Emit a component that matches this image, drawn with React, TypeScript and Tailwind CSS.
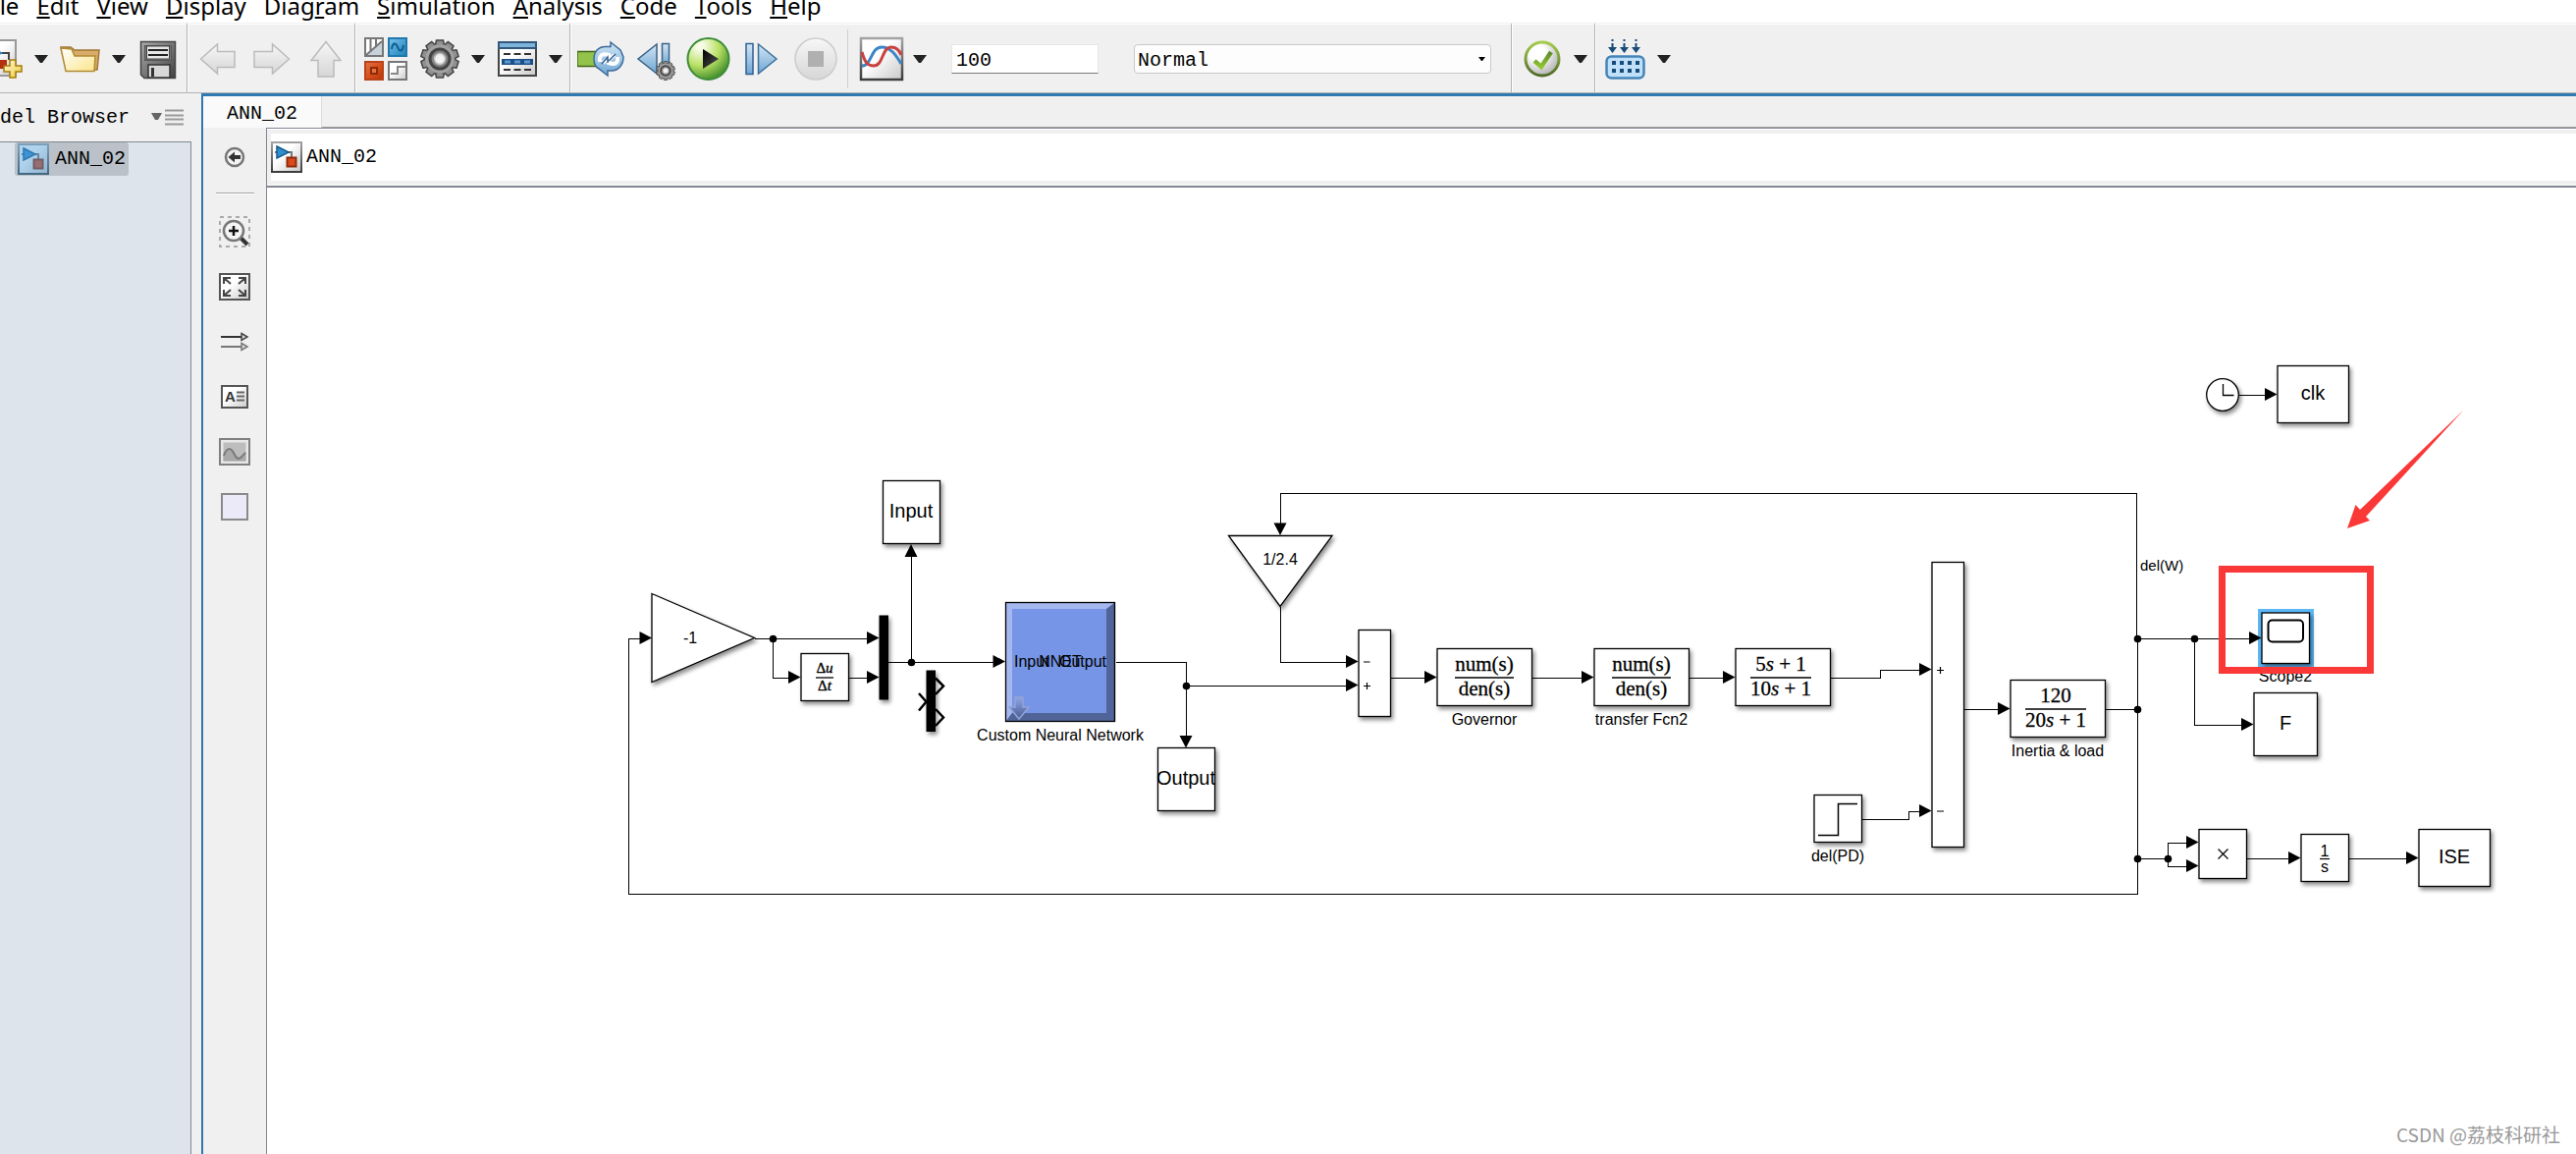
import { useState, type ReactNode } from 'react';

const MENUS = [
  { pre: '', key: 'F', post: 'ile' },
  { pre: '', key: 'E', post: 'dit' },
  { pre: '', key: 'V', post: 'iew' },
  { pre: '', key: 'D', post: 'isplay' },
  { pre: 'Diag', key: 'r', post: 'am' },
  { pre: '', key: 'S', post: 'imulation' },
  { pre: '', key: 'A', post: 'nalysis' },
  { pre: '', key: 'C', post: 'ode' },
  { pre: '', key: 'T', post: 'ools' },
  { pre: '', key: 'H', post: 'elp' },
];

// gradients and filters shared by every icon
function SharedDefs() {
  return (
    <svg className="absolute h-0 w-0" aria-hidden="true">
      <defs>
        <linearGradient id="paper" x1="0" y1="0" x2="1" y2="1">
          <stop offset="0.4" stopColor="#fff" />
          <stop offset="1" stopColor="#c9c9c9" />
        </linearGradient>
        <linearGradient id="frame" x1="0" y1="0" x2="0" y2="1">
          <stop offset="0" stopColor="#a3a3a3" />
          <stop offset="1" stopColor="#3c3c3c" />
        </linearGradient>
        <linearGradient id="metal" x1="0" y1="0" x2="1" y2="1">
          <stop offset="0" stopColor="#a9a9a9" />
          <stop offset="0.6" stopColor="#6d6d6d" />
          <stop offset="1" stopColor="#3f3f3f" />
        </linearGradient>
        <linearGradient id="sky" x1="0" y1="0" x2="0" y2="1">
          <stop offset="0" stopColor="#d3e6f5" />
          <stop offset="1" stopColor="#6ea6d3" />
        </linearGradient>
        <linearGradient id="azure" x1="0" y1="0" x2="1" y2="1">
          <stop offset="0" stopColor="#7cc4ec" />
          <stop offset="1" stopColor="#1b7fb9" />
        </linearGradient>
        <linearGradient id="rust" x1="0" y1="0" x2="1" y2="1">
          <stop offset="0" stopColor="#e0764a" />
          <stop offset="0.5" stopColor="#d9501c" />
          <stop offset="1" stopColor="#b93406" />
        </linearGradient>
        <linearGradient id="gold" x1="0" y1="0" x2="1" y2="1">
          <stop offset="0" stopColor="#fffbe0" />
          <stop offset="1" stopColor="#ecc93a" />
        </linearGradient>
        <linearGradient id="folder" x1="0" y1="0" x2="1" y2="1">
          <stop offset="0" stopColor="#fff" />
          <stop offset="1" stopColor="#fbe58a" />
        </linearGradient>
        <radialGradient id="go" cx="0.3" cy="0.2" r="0.85">
          <stop offset="0.1" stopColor="#f6fbe6" />
          <stop offset="0.55" stopColor="#b9e064" />
          <stop offset="1" stopColor="#3f8c2a" />
        </radialGradient>
        <linearGradient id="ghost" x1="0" y1="0" x2="0" y2="1">
          <stop offset="0" stopColor="#f7f7f7" />
          <stop offset="1" stopColor="#d6d6d6" />
        </linearGradient>
        <radialGradient id="pearl" cx="0.35" cy="0.3" r="0.8">
          <stop offset="0.3" stopColor="#fff" />
          <stop offset="1" stopColor="#a8a8a8" />
        </radialGradient>
        <linearGradient id="ringGreen" x1="0" y1="0" x2="0" y2="1">
          <stop offset="0" stopColor="#a7cc50" />
          <stop offset="1" stopColor="#4f6b28" />
        </linearGradient>
        <linearGradient id="leaf" x1="0" y1="0" x2="0" y2="1">
          <stop offset="0" stopColor="#5b8a2c" />
          <stop offset="1" stopColor="#8fc52f" />
        </linearGradient>
        <linearGradient id="coal" x1="0" y1="0" x2="1" y2="1">
          <stop offset="0" stopColor="#000" />
          <stop offset="1" stopColor="#555" />
        </linearGradient>
        <linearGradient id="download" x1="0" y1="0" x2="0" y2="1">
          <stop offset="0" stopColor="#8fa5e4" />
          <stop offset="1" stopColor="#4a5c94" />
        </linearGradient>
        <filter id="shadow" x="-20%" y="-20%" width="150%" height="150%">
          <feDropShadow dx="2" dy="3" stdDeviation="2" floodColor="#000" floodOpacity="0.45" />
        </filter>
      </defs>
    </svg>
  );
}

function Icon({ children }: { children: ReactNode }) {
  return (
    <svg viewBox="0 0 48 48" className="h-12 w-12" aria-hidden="true">
      {children}
    </svg>
  );
}

function ToolButton({ label, disabled, children }: { label: string; disabled?: boolean; children: ReactNode }) {
  return (
    <button type="button" title={label} aria-label={label} disabled={disabled} className="flex w-[55px] shrink-0 items-center justify-center">
      <Icon>{children}</Icon>
    </button>
  );
}

function CaretButton({ label }: { label: string }) {
  return (
    <button type="button" aria-label={label} className="flex w-6 shrink-0 items-center justify-center">
      <svg viewBox="0 0 14 8" className="h-2 w-3.5" aria-hidden="true">
        <path d="M0 0H14L8 8H6Z" fill="#222" />
      </svg>
    </button>
  );
}

function ToolGroup({ children, last }: { children: ReactNode; last?: boolean }) {
  return (
    <div className={`flex shrink-0 items-stretch border-l border-l-white px-0.5 pt-0.5 ${last ? '' : 'border-r border-r-[#b4b4b4]'}`}>
      {children}
    </div>
  );
}

const GEAR_TEETH = [0, 36, 72, 108, 144, 180, 216, 252, 288, 324];

function Gear({ cx, cy, r }: { cx: number; cy: number; r: number }) {
  const k = r / 20;
  return (
    <g transform={`translate(${cx} ${cy}) scale(${k})`}>
      {GEAR_TEETH.map(a => (
        <path key={a} d="M-4.5 -14L-3.5 -19H3.5L4.5 -14Z" transform={`rotate(${a})`} fill="#909090" stroke="#444" strokeWidth="1.5" />
      ))}
      <circle r="15" fill="#a2a2a2" />
      <circle r="10" fill="#808080" stroke="#444" strokeWidth="3" />
      <circle r="5.5" fill="#f3f3f3" stroke="#c2c2c2" strokeWidth="1.5" />
    </g>
  );
}

function ModelIcon({ selected }: { selected?: boolean }) {
  return (
    <svg viewBox="0 0 32 32" className="h-8 w-8 shrink-0" aria-hidden="true">
      <rect x="1" y="1" width="30" height="30" fill="url(#paper)" stroke="url(#frame)" strokeWidth="2" />
      <path d="M4 11H21V17" fill="none" stroke="#777" strokeWidth="2" />
      <path d="M6 5L18 11L6 17Z" fill="#2f8fd0" stroke="#175b8c" strokeWidth="1.5" />
      <rect x="16.5" y="16.5" width="9" height="9" fill="#d94a1c" stroke="#8e2c0c" strokeWidth="2" />
      {selected && <rect width="32" height="32" fill="#4d9bd6" opacity="0.45" />}
    </svg>
  );
}

function Toolbar() {
  const [stopTime, setStopTime] = useState('100');

  return (
    <div className="flex h-[71px] shrink-0 border-b border-[#b4b4b4] bg-[#f0f0f0] shadow-[inset_0_1px_0_#fff]">
      <div className="-ml-7 flex shrink-0">
        <ToolGroup>
          <ToolButton label="New model">
            <rect x="5" y="5" width="32" height="36" fill="url(#paper)" stroke="#999" strokeWidth="2" />
            <path d="M14 18H30V25" fill="none" stroke="#444" strokeWidth="2" />
            <path d="M12 11L24 18L12 25Z" fill="#2f8fd0" />
            <rect x="19" y="25" width="9" height="9" fill="#b3310f" />
            <path d="M31 25H37V31H43V37H37V43H31V37H25V31H31Z" fill="url(#gold)" stroke="#a67c08" strokeWidth="1.5" />
          </ToolButton>
          <CaretButton label="New options" />
          <ToolButton label="Open">
            <path d="M4 12H14L18 15H43L41 35H10Z" fill="#d9ad69" stroke="#a07633" strokeWidth="1.5" />
            <path d="M4 13L15 14L18 21H39L38 36.5H9Z" fill="url(#folder)" stroke="#b08a35" strokeWidth="1.5" />
          </ToolButton>
          <CaretButton label="Open options" />
          <ToolButton label="Save">
            <path d="M6.5 6.5H41.5V43.5H10L6.5 40Z" fill="url(#metal)" stroke="#444" strokeWidth="1.5" />
            <rect x="10.5" y="10.5" width="27" height="15" fill="#777" stroke="#555" />
            <rect x="12.5" y="11" width="23" height="13" fill="#e6e6e6" stroke="#444" />
            <path d="M14 15H34M14 20H34" stroke="#222" strokeWidth="2" />
            <path d="M14 43V30H36V43Z" fill="#d8d8d8" stroke="#333" strokeWidth="1.5" />
            <path d="M18.5 33V42" stroke="#333" strokeWidth="3" />
          </ToolButton>
        </ToolGroup>
      </div>
      <ToolGroup>
        <ToolButton label="Back" disabled>
          <path d="M6.5 24L23.5 9V16.5H41V32.5H23.5V39Z" fill="url(#ghost)" stroke="#bbb" strokeWidth="1.5" />
        </ToolButton>
        <ToolButton label="Forward" disabled>
          <path d="M41.5 24L24.5 9V16.5H6V32.5H24.5V39Z" fill="url(#ghost)" stroke="#bbb" strokeWidth="1.5" />
        </ToolButton>
        <ToolButton label="Up" disabled>
          <path d="M24 6.5L39 25.5H32V42H16V25.5H9Z" fill="url(#ghost)" stroke="#bbb" strokeWidth="1.5" />
        </ToolButton>
      </ToolGroup>
      <ToolGroup>
        <ToolButton label="Library browser">
          <rect x="3" y="3" width="18" height="18" fill="#c6d2da" stroke="#777" strokeWidth="2" />
          <path d="M4 4h4v13l-4 3ZM9 4h4v9l-4 4ZM15 4h5v3l-5 4Z" fill="#fff" />
          <path d="M8.5 4V17M14 4V12M4 20L20 6" fill="none" stroke="#777" strokeWidth="2" />
          <rect x="27" y="3" width="18" height="18" fill="url(#azure)" stroke="#1f78ad" strokeWidth="2" />
          <path d="M30 14C31 7 34 7 36 12S41 17 42 10" fill="none" stroke="#0d5e90" strokeWidth="2" />
          <rect x="3" y="27" width="18" height="18" fill="url(#rust)" stroke="#b8431a" strokeWidth="2" />
          <rect x="9" y="33" width="6" height="6" fill="#e4743f" stroke="#8c2c08" strokeWidth="2" />
          <rect x="27" y="27" width="18" height="18" fill="url(#paper)" stroke="#777" strokeWidth="2" />
          <path d="M29 39H36V32H44" fill="none" stroke="#888" strokeWidth="2" />
        </ToolButton>
        <ToolButton label="Model configuration parameters">
          <Gear cx={24} cy={24} r={20} />
        </ToolButton>
        <CaretButton label="Configuration options" />
        <ToolButton label="Model explorer">
          <rect x="5" y="7" width="38" height="34" fill="url(#paper)" stroke="#444" strokeWidth="2" />
          <rect x="5" y="7" width="38" height="6" fill="#7db4dc" stroke="#33587a" strokeWidth="2" />
          <path d="M10 19H17M20.5 19H27.5M31 19H38" stroke="#333" strokeWidth="2" />
          <path d="M10 35H17M20.5 35H27.5M31 35H38" stroke="#333" strokeWidth="2" />
          <path d="M8 27H40" stroke="#1c4f86" strokeWidth="6" />
          <path d="M11 27H17M21 27H27M31 27H37" stroke="#5c9bd2" strokeWidth="3" />
        </ToolButton>
        <CaretButton label="Explorer options" />
      </ToolGroup>
      <ToolGroup>
        <ToolButton label="Update diagram">
          <rect x="0" y="16.5" width="22" height="15" fill="#93c34a" stroke="#41651a" strokeWidth="1.5" />
          <path d="M17 24C17 16 22 11.5 29 11.5H34V7L44 15L47 22C47 30 42 36 35 36H31V41L22 34C18 32 17 28 17 24Z" fill="url(#sky)" stroke="#3c6a9a" strokeWidth="1.5" />
          <path d="M23 27C22 20 26 18 32 20V25L38 20M41 22C42 29 38 30 32 28V23L26 28" fill="none" stroke="#fff" strokeWidth="4" />
          <path d="M25 29L31 22V28M39 19L32 26" fill="none" stroke="#345f90" strokeWidth="1.5" />
        </ToolButton>
        <ToolButton label="Step back">
          <path d="M26 9V39L7 24Z" fill="url(#sky)" stroke="#3b6285" strokeWidth="1.5" />
          <rect x="31.5" y="8.5" width="7" height="22" fill="url(#sky)" stroke="#3b6285" strokeWidth="1.5" />
          <Gear cx={35} cy={36} r={10} />
        </ToolButton>
        <ToolButton label="Run">
          <circle cx="23.5" cy="24" r="21" fill="url(#go)" stroke="#3c8c38" strokeWidth="2" />
          <path d="M18 14L34 24L18 34Z" fill="url(#coal)" />
        </ToolButton>
        <ToolButton label="Step forward">
          <rect x="7" y="8.5" width="7" height="31" fill="url(#sky)" stroke="#2f5f92" strokeWidth="1.5" />
          <path d="M19.5 9V39L38 24Z" fill="url(#sky)" stroke="#3b7099" strokeWidth="1.5" />
        </ToolButton>
        <ToolButton label="Stop" disabled>
          <circle cx="23" cy="24" r="21" fill="url(#ghost)" stroke="#ccc" strokeWidth="1.5" />
          <rect x="15" y="16" width="16" height="16" fill="#b0b0b0" />
        </ToolButton>
        <div className="my-1 mr-1.5 ml-1 w-px bg-[#cfcfcf]" />
        <ToolButton label="Simulation data inspector">
          <rect x="3" y="3" width="42" height="42" fill="url(#paper)" stroke="url(#frame)" strokeWidth="2.5" />
          <path d="M4 31C14 31 13 12 24 12C33 12 38 19 44 29" fill="none" stroke="#3b86c6" strokeWidth="3" />
          <path d="M4 17C7 28 10 31 16 31C26 31 24 12 34 12C39 12 42 15 44 20" fill="none" stroke="#c9423f" strokeWidth="3" />
        </ToolButton>
        <CaretButton label="Inspector options" />
        <div className="ml-5 flex items-center gap-9 pr-[18px]">
          <input
            aria-label="Simulation stop time"
            value={stopTime}
            onChange={e => setStopTime(e.target.value)}
            className="h-[30px] w-[150px] border border-[#e6e6e6] border-b-[#7a7a7a] bg-white px-1 pt-0.5 font-['Liberation_Mono',monospace] text-xl leading-7 text-black outline-none"
          />
          <div className="relative flex items-center">
            <select
              aria-label="Simulation mode"
              defaultValue="Normal"
              className="h-[30px] w-[364px] appearance-none rounded border border-[#c8c8c8] bg-[#fdfdfd] px-[3px] pt-0.5 font-['Liberation_Mono',monospace] text-xl leading-7 text-black outline-none"
            >
              <option>Normal</option>
              <option>Accelerator</option>
              <option>Rapid Accelerator</option>
            </select>
            <svg viewBox="0 0 7 4" className="pointer-events-none absolute right-1.5 h-1 w-[7px]" aria-hidden="true">
              <path d="M0 0H7L4 4H3Z" fill="#000" />
            </svg>
          </div>
        </div>
      </ToolGroup>
      <ToolGroup>
        <ToolButton label="Model advisor">
          <circle cx="24" cy="24" r="17" fill="url(#pearl)" stroke="url(#ringGreen)" strokeWidth="3" />
          <path d="M16 26L23 32L33 17" fill="none" stroke="url(#leaf)" strokeWidth="4.5" />
        </ToolButton>
        <CaretButton label="Advisor options" />
      </ToolGroup>
      <ToolGroup last>
        <ToolButton label="Build model">
          <path d="M10.5 4V6M22.5 4V6M34.5 4V6M10.5 8V13M22.5 8V13M34.5 8V13" stroke="#174b7a" strokeWidth="2" />
          <path d="M6 12H15L10.5 18ZM18 12H27L22.5 18ZM30 12H39L34.5 18Z" fill="#174b7a" />
          <rect x="4.5" y="21.5" width="38" height="22" rx="5" fill="#bfe0f8" stroke="#4484b8" strokeWidth="2.5" />
          <path d="M9 28H39M9 36H39" stroke="#174b7a" strokeWidth="4" strokeDasharray="4 4" strokeDashoffset="-1" />
        </ToolButton>
        <CaretButton label="Build options" />
      </ToolGroup>
    </div>
  );
}

function ModelBrowser() {
  return (
    <aside className="flex w-[205px] shrink-0 flex-col bg-[#f0f0f0]">
      <div className="flex h-[49px] items-center justify-between pr-[18px]">
        <h2 className="-ml-6 text-xl">Model Browser</h2>
        <button type="button" aria-label="Panel menu">
          <svg viewBox="0 0 33 17" className="h-[17px] w-[33px]" aria-hidden="true">
            <path d="M0 4H11L7 11H4Z" fill="#666" />
            <path d="M14 1.5H33M14 6.5H33M14 10.5H33M14 15.5H33" stroke="#999" strokeWidth="2" />
          </svg>
        </button>
      </div>
      <ul className="mr-2.5 flex-1 border-t border-r border-[#828790] bg-[#dde4ec]">
        <li className="flex pl-[15px]">
          <button type="button" className="flex h-[34px] items-center gap-1.5 rounded-[3px] bg-[#bbc1c8] px-[3px] text-xl">
            <ModelIcon selected />
            ANN_02
          </button>
        </li>
      </ul>
    </aside>
  );
}

function PaletteButton({ label, children }: { label: string; children: ReactNode }) {
  return (
    <button type="button" title={label} aria-label={label} className="flex h-14 w-full items-center justify-center">
      <svg viewBox="0 0 32 32" className="h-8 w-8" aria-hidden="true">
        {children}
      </svg>
    </button>
  );
}

function Palette() {
  return (
    <div className="flex w-16 shrink-0 flex-col items-center bg-[#f0f0f0] pt-0.5">
      <PaletteButton label="Hide explorer bar">
        <circle cx="16" cy="16" r="9" fill="#f4f4f4" stroke="#777" strokeWidth="2.5" />
        <path d="M9.5 16L16 10.5V14H22V18H16V21.5Z" fill="#333" />
      </PaletteButton>
      <div className="mt-2 mb-2.5 h-0.5 w-[39px] border-t border-[#a5a5a5] bg-white" />
      <PaletteButton label="Zoom">
        <path d="M1 1H31V31H1Z" fill="none" stroke="#aaa" strokeWidth="2" strokeDasharray="4 4" />
        <path d="M21 21L29 29" stroke="#333" strokeWidth="4" />
        <circle cx="15" cy="15" r="10" fill="#f5f5f5" stroke="#777" strokeWidth="2.5" />
        <path d="M15 10V20M10 15H20" stroke="#111" strokeWidth="2.5" />
      </PaletteButton>
      <PaletteButton label="Fit to view">
        <rect x="1" y="3" width="30" height="26" fill="url(#paper)" stroke="#555" strokeWidth="2" />
        <path d="M5 13V7H12M5 7L12 13M27 13V7H20M27 7L20 13M5 19V25H12M5 25L12 19M27 19V25H20M27 25L20 19" fill="none" stroke="#444" strokeWidth="2" />
      </PaletteButton>
      <PaletteButton label="Sample time">
        <path d="M2 11H23" stroke="#333" strokeWidth="2" />
        <path d="M23 7.5L29 11L23 14.5Z" fill="#ddd" stroke="#444" strokeWidth="1.5" />
        <path d="M2 21H23" stroke="#777" strokeWidth="2" />
        <path d="M23 17.5L29 21L23 24.5Z" fill="#ddd" stroke="#777" strokeWidth="1.5" />
      </PaletteButton>
      <PaletteButton label="Annotation">
        <rect x="3" y="5" width="26" height="22" fill="url(#paper)" stroke="#555" strokeWidth="2" />
        <text x="6" y="21" className="font-['Liberation_Sans',sans-serif] text-[15px] font-bold" fill="#333">
          A
        </text>
        <path d="M18 11.5H26M18 15.5H26M18 19.5H26" stroke="#666" strokeWidth="2" />
      </PaletteButton>
      <PaletteButton label="Image">
        <rect x="1" y="3" width="30" height="26" fill="#e8e8e8" stroke="#808080" strokeWidth="2" />
        <rect x="4.5" y="6.5" width="23" height="19" fill="#bdbdbd" />
        <path d="M4.5 20C8 10 12 11 16 18S23 21 27.5 16V25.5H4.5Z" fill="#a8a8a8" />
        <path d="M5 20C8 11 12 11 16 19S23 21 27 17" fill="none" stroke="#7a7a7a" strokeWidth="2" />
      </PaletteButton>
      <PaletteButton label="Area">
        <rect x="3" y="3" width="26" height="26" fill="#eaeaf8" stroke="#8a8a8a" strokeWidth="2" />
      </PaletteButton>
    </div>
  );
}

interface Box {
  x: number;
  y: number;
  w: number;
  h: number;
}

const BLOCKS: Box[] = [
  { x: 899.5, y: 489.5, w: 58, h: 64 },
  { x: 816, y: 665.5, w: 48.5, h: 48 },
  { x: 1179.5, y: 761.5, w: 58, h: 64 },
  { x: 1384, y: 641.5, w: 32.5, h: 88 },
  { x: 1464, y: 660.5, w: 96.5, h: 58 },
  { x: 1624, y: 660.5, w: 96.5, h: 58 },
  { x: 1768, y: 660.5, w: 96.5, h: 58 },
  { x: 1968, y: 572.5, w: 32.5, h: 290 },
  { x: 1848, y: 809.5, w: 48.5, h: 48 },
  { x: 2048, y: 692.5, w: 96.5, h: 58 },
  { x: 2320, y: 372.5, w: 72.5, h: 58 },
  { x: 2296, y: 705.5, w: 64.5, h: 64 },
  { x: 2240, y: 844.5, w: 48.5, h: 50 },
  { x: 2344, y: 849.5, w: 48.5, h: 48 },
  { x: 2464, y: 844.5, w: 72.5, h: 58 },
];

const WIRES = [
  'M652 650.5H640.5V910.5H2177.5V650.5',
  'M769 650.5H884M787.5 650.5V690.5H804M865 690.5H884',
  'M905 674.5H1012M928.5 674.5V566',
  'M1137 674.5H1208.5V750M1208.5 698.5H1372',
  'M2176.5 651V502.5H1304.5V534',
  'M1304.5 618V674.5H1372',
  'M1417 690.5H1452M1561 690.5H1612M1721 690.5H1756',
  'M1865 690.5H1915.5V682.5H1956',
  'M1897 834.5H1944.5V826.5H1956',
  'M2001 722.5H2036M2145 722.5H2177.5',
  'M2177.5 650.5H2292M2235.5 650.5V738.5H2284',
  'M2177.5 874.5H2208.5M2228 858.5H2208.5V882.5H2228',
  'M2289 874.5H2332M2393 874.5H2452',
  'M2281 402.5H2308',
];

// arrow tips of the left-to-right wires
const ARROWS: [number, number][] = [
  [664, 649.5], [895.5, 649.5], [815.5, 689.5], [895.5, 689.5], [1024, 673.5],
  [1383.5, 673.5], [1383.5, 697.5], [1463.5, 689.5], [1623.5, 689.5], [1767.5, 689.5],
  [1967.5, 681.5], [1967.5, 825.5], [2047.5, 721.5], [2303.5, 649.5], [2295.5, 737.5],
  [2239.5, 857.5], [2239.5, 881.5], [2343.5, 873.5], [2463.5, 873.5], [2319.5, 401.5],
];

const JUNCTIONS: [number, number][] = [
  [787.5, 650.5], [928.5, 674.5], [1208.5, 698.5], [2177.5, 650.5],
  [2177.5, 722.5], [2177.5, 874.5], [2235.5, 650.5], [2208.5, 874.5],
];

const CAPTIONS = [
  { x: 1080, y: 754, text: 'Custom Neural Network' },
  { x: 1512, y: 738, text: 'Governor' },
  { x: 1672, y: 738, text: 'transfer Fcn2' },
  { x: 2096, y: 770, text: 'Inertia & load' },
  { x: 1872, y: 877, text: 'del(PD)' },
  { x: 2328, y: 694, text: 'Scope2' },
  { x: 703, y: 655, text: '-1' },
  { x: 1304, y: 575, text: '1/2.4' },
  { x: 1080, y: 679, text: 'NNET' },
  { x: 2368, y: 872, text: '1' },
  { x: 2368, y: 888, text: 's' },
];

const TITLES = [
  { x: 928, y: 527, text: 'Input' },
  { x: 1208, y: 799, text: 'Output' },
  { x: 2356, y: 407, text: 'clk' },
  { x: 2328, y: 743, text: 'F' },
  { x: 2500, y: 879, text: 'ISE' },
];

function Fraction({ x, y, half, top, bottom }: { x: number; y: number; half: number; top: ReactNode; bottom: ReactNode }) {
  return (
    <g className="font-['Liberation_Serif',serif] text-[21px]" textAnchor="middle" stroke="#000" strokeWidth="0.3">
      <text x={x} y={y - 7}>{top}</text>
      <path d={`M${x - half} ${y}H${x + half}`} strokeWidth="1.5" />
      <text x={x} y={y + 18}>{bottom}</text>
    </g>
  );
}

const S = <tspan className="italic">s</tspan>;

function Diagram() {
  return (
    <svg
      viewBox="272 191 2352 984"
      preserveAspectRatio="xMinYMin meet"
      className="absolute inset-0 h-full w-full font-['Liberation_Sans',sans-serif]"
      role="img"
      aria-label="ANN_02 block diagram"
    >
      <g fill="none" stroke="#000" strokeWidth="1" shapeRendering="crispEdges">
        {WIRES.map(d => (
          <path key={d} d={d} />
        ))}
      </g>

      <rect x="2300" y="620" width="57" height="60" fill="#5cb8f8" />
      <g fill="#fff" stroke="#000" strokeWidth="1.3" filter="url(#shadow)">
        {BLOCKS.map(b => (
          <rect key={`${b.x}-${b.y}`} x={b.x} y={b.y} width={b.w} height={b.h} />
        ))}
        <rect x="2304" y="624" width="48.5" height="51.5" />
        <path d="M664 604.5L768.5 649.5L664 694.5Z" />
        <path d="M1251.5 545.5H1357L1304 617.5Z" />
        <circle cx="2264" cy="402" r="16.3" />
        <rect x="895.5" y="626.5" width="9.5" height="86" fill="#000" stroke="none" />
        <rect x="943.5" y="682.5" width="9.5" height="62.5" fill="#000" stroke="none" />
      </g>

      {/* unconnected demux ports */}
      <path d="M936 706L943.5 714.5L936 723.5M953 690.5L961 698.5L953 707M953 722L961 730.5L953 739" fill="none" stroke="#000" strokeWidth="2.5" />

      {ARROWS.map(([x, y]) => (
        <path key={`${x}-${y}`} d={`M${x} ${y}l-12.5 -6.5v13Z`} />
      ))}
      <path d="M928 554l-6.5 13h13ZM1304 545l-6.5 -12.5h13ZM1208 761.5l-6.5 -12.5h13Z" />
      {JUNCTIONS.map(([x, y]) => (
        <circle key={`${x}-${y}`} cx={x} cy={y} r="3.8" />
      ))}

      {/* neural network block with its bevel */}
      <rect x="1024.5" y="613.5" width="111" height="121" fill="#7695e6" />
      <path d="M1025 614H1135L1127 620H1031V726L1025 734Z" fill="#a5b7ef" />
      <path d="M1135 614V734H1025L1031 726H1127V620Z" fill="#516499" />
      <rect x="1024.5" y="613.5" width="111" height="121" fill="none" stroke="#000" strokeWidth="1.3" />
      <path d="M1034 710H1042V720H1048L1038 732L1028 720H1034Z" fill="url(#download)" stroke="#93a4d6" strokeWidth="1.5" />

      <g className="text-base" textAnchor="middle">
        {CAPTIONS.map(c => (
          <text key={c.text} x={c.x} y={c.y}>{c.text}</text>
        ))}
        <text x="1033" y="679" textAnchor="start">Input</text>
        <text x="1127" y="679" textAnchor="end">Output</text>
      </g>
      <g className="text-xl" textAnchor="middle">
        {TITLES.map(c => (
          <text key={c.text} x={c.x} y={c.y}>{c.text}</text>
        ))}
      </g>
      <text x="2180" y="581" className="text-[15px]">del(W)</text>

      <Fraction x={1512} y={690} half={30} top="num(s)" bottom="den(s)" />
      <Fraction x={1672} y={690} half={30} top="num(s)" bottom="den(s)" />
      <Fraction x={1814} y={690} half={31} top={<>5{S} + 1</>} bottom={<>10{S} + 1</>} />
      <Fraction x={2094} y={722} half={31} top="120" bottom={<>20{S} + 1</>} />
      <g className="font-['Liberation_Serif',serif] text-[15px]" textAnchor="middle" stroke="#000" strokeWidth="0.4">
        <text x="840" y="685">Δ<tspan className="italic">u</tspan></text>
        <path d="M831 690H849" strokeWidth="1.3" />
        <text x="840" y="703">Δ<tspan className="italic">t</tspan></text>
      </g>

      <g fill="none" stroke="#000">
        <path d="M1389 674H1395.5M1389 698.5H1396M1392.5 695V702" strokeWidth="1.2" />
        <path d="M1973 682.5H1980M1976.5 679V686M1973 826H1980" strokeWidth="1.2" />
        <path d="M1852 850.5H1872.5V818.5H1892" strokeWidth="1.5" />
        <path d="M2264.5 391V402.5H2275.5" strokeWidth="1.3" />
        <path d="M2259.5 864.5L2269.5 874.5M2269.5 864.5L2259.5 874.5" strokeWidth="1.2" />
        <path d="M2363 874.5H2373" strokeWidth="1.2" />
        <rect x="2310.5" y="631.5" width="35.5" height="22" rx="4" strokeWidth="2" />
      </g>

      {/* red markup over the scope */}
      <rect x="2263.5" y="579.5" width="151" height="103" fill="none" stroke="#fb3838" strokeWidth="7" />
      <path d="M2391 538L2399.5 514L2404 519L2509.5 417.5L2410 526L2414 530Z" fill="#fb3838" />
    </svg>
  );
}

export default function App() {
  return (
    <div className="flex h-screen flex-col overflow-hidden bg-white font-['Liberation_Mono',monospace] text-black">
      <SharedDefs />
      <nav className="flex h-6 shrink-0 items-end border-b border-[#f0f0f0] font-['Noto_Sans',sans-serif] text-2xl leading-[34px]">
        <div className="-ml-[19px] flex gap-[18px]">
          {MENUS.map(m => (
            <button key={m.post} type="button" className="whitespace-nowrap">
              {m.pre}
              <span className="underline decoration-2 underline-offset-2">{m.key}</span>
              {m.post}
            </button>
          ))}
        </div>
      </nav>
      <Toolbar />
      <div className="flex min-h-0 flex-1 bg-[#f0f0f0]">
        <ModelBrowser />
        <main className="flex min-w-0 flex-1 flex-col border-t-[3px] border-l-2 border-[#2f78b0]">
          <div className="flex h-8 shrink-0">
            <button type="button" className="border-r border-[#ddd] bg-[#fafafa] px-6 pt-1 text-xl">
              ANN_02
            </button>
            <div className="flex-1 border-b border-[#a0a0a0]" />
          </div>
          <div className="flex min-h-0 flex-1">
            <Palette />
            <section className="flex min-w-0 flex-1 flex-col border-t border-l border-[#828790]">
              <div className="shrink-0 border-b-2 border-[#828790] bg-[#f0f0f0] py-[5px] pl-1 shadow-[inset_0_1px_0_#fff,inset_0_-1px_0_#fff]">
                <div className="flex h-12 items-center gap-1 bg-white text-xl">
                  <ModelIcon />
                  ANN_02
                </div>
              </div>
              <div className="relative flex-1 overflow-hidden bg-white">
                <Diagram />
                <p className="absolute right-4 bottom-1.5 font-['Noto_Sans_CJK_SC',sans-serif] text-[19px] leading-7 text-[#999]">
                  CSDN @荔枝科研社
                </p>
              </div>
            </section>
          </div>
        </main>
      </div>
    </div>
  );
}
